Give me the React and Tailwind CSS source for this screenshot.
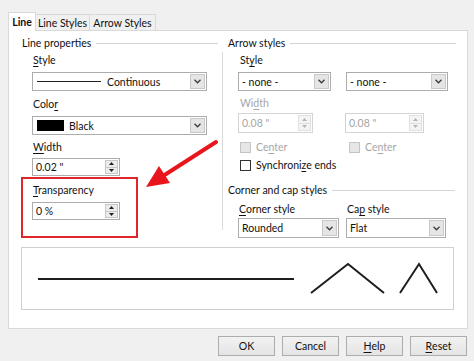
import React from "react";

const FONT = { fontFamily: 'Lato, "Liberation Sans", sans-serif' };

const U = ({ children }) => <span className="underline underline-offset-[2px]">{children}</span>;

const Chevron = () => (
  <svg width="7" height="5" viewBox="0 0 7 5">
    <path d="M0.5 0.8 L3.5 3.8 L6.5 0.8" fill="none" stroke="#3c3c3c" strokeWidth="1.3" />
  </svg>
);

const Dropdown = ({ className = "", children }) => (
  <div className={`flex items-center bg-white border border-[#acacac] ${className}`}>
    <div className="flex-1 flex items-center pl-[3px] overflow-hidden whitespace-nowrap">{children}</div>
    <div className="w-[15px] h-[calc(100%-2px)] mr-px bg-[#e5e5e5] border border-[#c9c9c9] flex items-center justify-center">
      <Chevron />
    </div>
  </div>
);

const Tri = ({ up, color }) => (
  <svg width="5" height="3" viewBox="0 0 5 3">
    <path d={up ? "M0 3 L2.5 0 L5 3 Z" : "M0 0 L2.5 3 L5 0 Z"} fill={color} />
  </svg>
);

const Spinner = ({ className = "", value, disabled }) => (
  <div
    className={`flex items-stretch bg-white border ${
      disabled ? "border-[#d4d4d4] text-[#a6a6a6]" : "border-[#acacac] text-[#111]"
    } ${className}`}
  >
    <div className="flex-1 flex items-center pl-[3px] whitespace-nowrap">{value}</div>
    <div className="w-[14px] flex flex-col py-px pr-px">
      <div className={`flex-1 flex items-center justify-center border ${disabled ? "border-[#e0e0e0] bg-[#f4f4f4]" : "border-[#c6c6c6] bg-[#ececec]"}`}>
        <Tri up color={disabled ? "#b5b5b5" : "#202020"} />
      </div>
      <div className={`flex-1 flex items-center justify-center border border-t-0 ${disabled ? "border-[#e0e0e0] bg-[#f4f4f4]" : "border-[#c6c6c6] bg-[#ececec]"}`}>
        <Tri color={disabled ? "#b5b5b5" : "#202020"} />
      </div>
    </div>
  </div>
);

const Heading = ({ children }) => (
  <div className="flex items-center h-[14px]">
    <span className="whitespace-nowrap">{children}</span>
    <div className="h-px bg-[#d5d5d5] flex-1 ml-[5px]" />
  </div>
);

const Check = ({ disabled, children }) => (
  <div className="flex items-center h-[14px]">
    <div className={`w-[11px] h-[11px] border ${disabled ? "bg-[#e6e6e6] border-[#c4c4c4]" : "bg-white border-[#333]"}`} />
    <span className={`ml-[5px] ${disabled ? "text-[#a6a6a6]" : ""}`}>{children}</span>
  </div>
);

const Button = ({ children }) => (
  <div className="w-[57px] h-[20px] flex items-center justify-center border border-[#adadad] bg-gradient-to-b from-[#f2f2f2] to-[#e4e4e4]">
    {children}
  </div>
);

export default function App() {
  return (
    <div className="relative w-[474px] h-[361px] bg-[#f0f0f0] pt-[12px] pl-[8px] overflow-hidden text-[10.5px] leading-[14px] text-[#111]" style={FONT}>
      {/* tabs */}
      <div className="flex items-end h-[18px]">
        <div className="relative z-10 h-[19px] -mb-px w-[28px] flex items-start justify-center pt-[2px] bg-white border border-b-0 border-[#d9d9d9] font-bold">
          Line
        </div>
        <div className="h-[16px] w-[54px] flex items-center justify-center whitespace-nowrap bg-[#f0f0f0] border border-b-0 border-l-0 border-[#d9d9d9]">
          Line Styles
        </div>
        <div className="h-[16px] w-[66px] flex items-center justify-center whitespace-nowrap bg-[#f0f0f0] border border-b-0 border-l-0 border-[#d9d9d9]">
          Arrow Styles
        </div>
      </div>

      {/* panel */}
      <div className="w-[460px] h-[299px] bg-white border border-[#d9d9d9] pt-[5px]">
        <div className="flex h-[202px] pl-[13px]">
          {/* left column */}
          <div className="w-[196px] flex flex-col">
            <Heading>Line properties</Heading>
            <div className="pl-[11px] mt-[3px] h-[14px]"><U>S</U>tyle</div>
            <Dropdown className="ml-[10px] mt-[5px] w-[175px] h-[19px]">
              <div className="w-[64px] h-px bg-[#222] ml-px mr-[6px]" />
              <span>Continuous</span>
            </Dropdown>
            <div className="pl-[11px] mt-[6px] h-[14px]">Colo<U>r</U></div>
            <Dropdown className="ml-[10px] mt-[5px] w-[175px] h-[19px]">
              <div className="w-[27px] h-[11px] bg-black ml-px mr-[5px]" />
              <span>Black</span>
            </Dropdown>
            <div className="pl-[11px] mt-[5px] h-[14px]"><U>W</U>idth</div>
            <Spinner className="ml-[10px] mt-[4px] w-[88px] h-[18px]" value={'0.02 "'} />
            <div className="-ml-px mt-px w-[117px] h-[61px] border-2 border-[#e0262a] pt-[4px] pl-[10px]">
              <div className="h-[14px]"><U>T</U>ransparency</div>
              <Spinner className="-ml-px mt-[5px] w-[88px] h-[18px]" value="0 %" />
            </div>
          </div>

          {/* separator */}
          <div className="w-px bg-[#dadada] ml-[4px] mr-[5px] mt-[16px] h-[178px]" />

          {/* right column */}
          <div className="w-[228px] flex flex-col">
            <Heading>Arrow styles</Heading>
            <div className="pl-[12px] mt-[3px] h-[14px]">St<U>y</U>le</div>
            <div className="flex ml-[10px] mt-[5px]">
              <Dropdown className="w-[93px] h-[19px]">- none -</Dropdown>
              <Dropdown className="ml-[15px] w-[102px] h-[19px]">- none -</Dropdown>
            </div>
            <div className="pl-[12px] mt-[5px] h-[14px] text-[#a6a6a6]">Wi<U>d</U>th</div>
            <div className="flex ml-[10px] mt-[3px]">
              <Spinner disabled className="w-[75px] h-[20px]" value={'0.08 "'} />
              <Spinner disabled className="ml-[32px] w-[79px] h-[20px]" value={'0.08 "'} />
            </div>
            <div className="flex ml-[12px] mt-[7px]">
              <div className="w-[109px]"><Check disabled>Ce<U>n</U>ter</Check></div>
              <Check disabled>Ce<U>n</U>ter</Check>
            </div>
            <div className="ml-[12px] mt-[4px]">
              <Check>Synchroni<U>z</U>e ends</Check>
            </div>
            <div className="mt-[11px] mr-px">
              <Heading>Corner and cap styles</Heading>
            </div>
            <div className="flex mt-[5px] h-[14px]">
              <div className="pl-[11px] w-[119px]"><U>C</U>orner style</div>
              <div>Ca<U>p</U> style</div>
            </div>
            <div className="flex ml-[10px] mt-[2px]">
              <Dropdown className="w-[101px] h-[20px]">Rounded</Dropdown>
              <Dropdown className="ml-[7px] w-[100px] h-[20px]">Flat</Dropdown>
            </div>
          </div>
        </div>

        {/* preview */}
        <div className="ml-[12px] mt-[9px] w-[433px] h-[63px] border border-[#cfcfcf] bg-white">
          <svg width="431" height="61" viewBox="1 1 431 61">
            <line x1="17" y1="32" x2="273" y2="32" stroke="#1e1e1e" strokeWidth="2" />
            <polyline points="290,46 327,17 363,46" fill="none" stroke="#1e1e1e" strokeWidth="2" />
            <polyline points="379,46 398,17 416,46" fill="none" stroke="#1e1e1e" strokeWidth="2" />
          </svg>
        </div>
      </div>

      {/* buttons */}
      <div className="flex justify-end gap-[7px] pr-[7px] mt-[7px]">
        <Button>OK</Button>
        <Button>Cancel</Button>
        <Button><U>H</U>elp</Button>
        <Button><U>R</U>eset</Button>
      </div>

      {/* red annotation arrow */}
      <svg className="absolute left-0 top-0 pointer-events-none" width="474" height="361">
        <line x1="216" y1="142" x2="163" y2="176" stroke="#e8161c" strokeWidth="4" strokeLinecap="round" />
        <polygon points="146,187 170,183 159,166" fill="#e8161c" />
      </svg>
    </div>
  );
}
